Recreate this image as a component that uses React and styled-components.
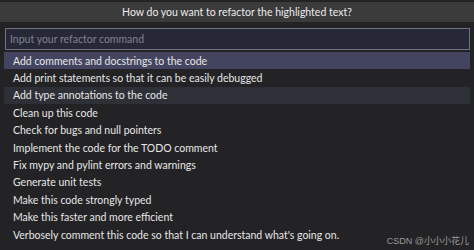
import React from 'react'
import styled, { createGlobalStyle } from 'styled-components'

const GlobalStyle = createGlobalStyle`
    html, body {
        margin: 0;
        padding: 0;
        background: #232325;
    }
    * {
        box-sizing: border-box;
    }
`

const commands = [
    'Add comments and docstrings to the code',
    'Add print statements so that it can be easily debugged',
    'Add type annotations to the code',
    'Clean up this code',
    'Check for bugs and null pointers',
    'Implement the code for the TODO comment',
    'Fix mypy and pylint errors and warnings',
    'Generate unit tests',
    'Make this code strongly typed',
    'Make this faster and more efficient',
    "Verbosely comment this code so that I can understand what's going on.",
]

export default function App() {
    return (
        <>
            <GlobalStyle />
            <Panel>
                <TitleBar>How do you want to refactor the highlighted text?</TitleBar>
                <InputWrap>
                    <CommandInput placeholder="Input your refactor command" />
                </InputWrap>
                <List>
                    {commands.map((text, i) => (
                        <Item key={text} active={i === 0} hovered={i === 2}>
                            {text}
                        </Item>
                    ))}
                </List>
                <Watermark>CSDN @小小小花儿</Watermark>
            </Panel>
        </>
    )
}

const Panel = styled.div`
    position: relative;
    width: 474px;
    height: 250px;
    overflow: hidden;
    padding-top: 2px;
    background: #232325;
    font-family: Lato, "Open Sans", sans-serif;
    color: #e6e6e6;
`

const TitleBar = styled.div`
    height: 20px;
    display: flex;
    align-items: center;
    justify-content: center;
    background: #3b3b3c;
    font-size: 10.5px;
    color: #ececec;
`

const InputWrap = styled.div`
    padding: 6px 4px 2px 5px;
`

const CommandInput = styled.input`
    display: block;
    width: 100%;
    height: 22px;
    padding: 0 4px;
    border: 1px solid #6f7181;
    background: #262838;
    color: #e6e6e6;
    font-family: inherit;
    font-size: 10.5px;
    outline: none;
    &::placeholder {
        color: #80828c;
    }
`

const List = styled.div`
    display: flex;
    flex-direction: column;
    padding: 0 4px;
`

const Item = styled.div`
    height: 17.4px;
    display: flex;
    align-items: center;
    padding-left: 9px;
    font-size: 10.5px;
    white-space: nowrap;
    background: ${p => (p.active ? '#434560' : p.hovered ? '#2e3038' : 'transparent')};
`

const Watermark = styled.div`
    position: absolute;
    right: 5px;
    bottom: 3px;
    font-size: 9px;
    color: #9a9a9a;
    font-family: "Liberation Sans", "Noto Sans CJK SC", sans-serif;
`
